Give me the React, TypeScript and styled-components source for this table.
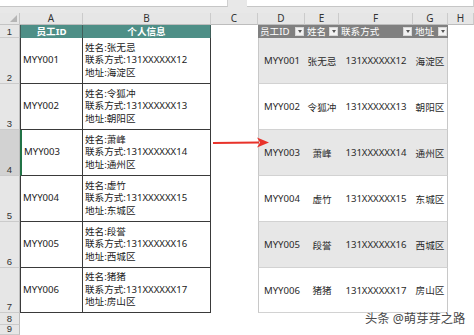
import styled, { createGlobalStyle } from "styled-components"

const GlobalStyle = createGlobalStyle`
    html, body {
        margin: 0;
        padding: 0;
        background: #ffffff;
    }
    body {
        font-family: "Noto Sans", "Noto Sans CJK SC", sans-serif;
        color: #222;
    }
`

const Screen = styled.div`
    position: relative;
    width: 474px;
    height: 335px;
    overflow: hidden;
    background: #e8e8e8;
    display: flex;
    flex-direction: column;
`

const TopStrip = styled.div`
    display: flex;
    gap: 19px;
    height: 7px;
    flex-shrink: 0;
`
const TopBox = styled.div<{ $w?: number }>`
    background: #fff;
    border-bottom: 1px solid #c6c6c6;
    border-right: 1px solid #d0d0d0;
    box-sizing: border-box;
    ${({ $w }) => ($w ? `width: ${$w}px;` : "flex: 1;")}
`

const Sheet = styled.div`
    margin-top: 6px;
    flex: 1;
    display: grid;
    grid-template-columns: 20px 63px 128px 47px 47px 34px 74px 35px 1fr;
    grid-template-rows: 12px 13px 46px 46px 46px 46px 46px 45px 12px 10px;
    background: #fff;
    font-size: 9.6px;
`

const Corner = styled.div`
    position: relative;
    background: #e6e6e6;
    border-right: 1px solid #c4c4c4;
    border-bottom: 1px solid #c4c4c4;
    box-sizing: border-box;
    &:after {
        content: '';
        position: absolute;
        right: 2px;
        bottom: 2px;
        border-left: 7px solid transparent;
        border-bottom: 7px solid #b5b5b5;
    }
`

const ColHead = styled.div`
    background: #e6e6e6;
    border-right: 1px solid #cbcbcb;
    border-bottom: 1px solid #bdbdbd;
    box-sizing: border-box;
    display: flex;
    align-items: flex-end;
    justify-content: center;
    font-size: 10px;
    line-height: 11px;
    color: #333;
`

const RowHead = styled.div<{ $active?: boolean }>`
    background: ${({ $active }) => ($active ? "#d2d2d2" : "#e6e6e6")};
    border-right: 1px solid #bdbdbd;
    border-bottom: 1px solid #cbcbcb;
    box-sizing: border-box;
    display: flex;
    align-items: flex-end;
    justify-content: center;
    font-family: "Liberation Sans", Arial, sans-serif;
    font-size: 9.5px;
    line-height: 11px;
    color: #333;
`

const Blank = styled.div``

const SrcHead = styled.div<{ $first?: boolean }>`
    background: #4e8f87;
    color: #fff;
    font-weight: 700;
    display: flex;
    align-items: center;
    justify-content: center;
    border-right: 1px solid #3f5f5a;
    ${({ $first }) => $first && "border-left: 1px solid #3f5f5a;"}
    box-sizing: border-box;
    line-height: 12px;
`

const SrcCell = styled.div<{ $first?: boolean; $active?: boolean }>`
    display: flex;
    flex-direction: column;
    justify-content: center;
    padding: 0 2px;
    border-right: 1px solid #3a3a3a;
    border-bottom: 1px solid #3a3a3a;
    ${({ $first, $active }) =>
        $first && `border-left: ${$active ? "2px solid #217346" : "1px solid #3a3a3a"};`}
    box-sizing: border-box;
    line-height: 12.6px;
    white-space: nowrap;
`

const TblHead = styled.div`
    background: #808080;
    color: #fff;
    display: flex;
    align-items: center;
    justify-content: space-between;
    padding: 0 1px 0 2px;
    box-sizing: border-box;
    white-space: nowrap;
    line-height: 12px;
`

const FilterBtn = styled.span`
    width: 9px;
    height: 9px;
    flex-shrink: 0;
    background: #f2f2f2;
    border: 1px solid #d8d8d8;
    box-sizing: border-box;
    display: flex;
    align-items: center;
    justify-content: center;
    &:after {
        content: '';
        border-left: 2.5px solid transparent;
        border-right: 2.5px solid transparent;
        border-top: 3px solid #555;
    }
`

const TblCell = styled.div<{ $shade?: boolean; $first?: boolean; $last?: boolean }>`
    background: ${({ $shade }) => ($shade ? "#e7e7e7" : "#ffffff")};
    display: flex;
    align-items: center;
    justify-content: center;
    border-bottom: 1px solid #d2d2d2;
    ${({ $first }) => $first && "border-left: 1px solid #c8c8c8;"}
    ${({ $last }) => $last && "border-right: 1px solid #c8c8c8;"}
    box-sizing: border-box;
    white-space: nowrap;
    color: #2a2a2a;
`

const Arrow = styled.svg`
    position: absolute;
    left: 211px;
    top: 136px;
`

const Watermark = styled.div`
    position: absolute;
    left: 365px;
    top: 310px;
    font-size: 12.3px;
    line-height: 18px;
    color: #4a4a4a;
    text-shadow: 0 0 2px #fff, 0 0 2px #fff;
    white-space: nowrap;
`

interface Person {
    id: string
    name: string
    phone: string
    addr: string
}

const people: Person[] = [
    { id: "MYY001", name: "张无忌", phone: "131XXXXXX12", addr: "海淀区" },
    { id: "MYY002", name: "令狐冲", phone: "131XXXXXX13", addr: "朝阳区" },
    { id: "MYY003", name: "萧峰", phone: "131XXXXXX14", addr: "通州区" },
    { id: "MYY004", name: "虚竹", phone: "131XXXXXX15", addr: "东城区" },
    { id: "MYY005", name: "段誉", phone: "131XXXXXX16", addr: "西城区" },
    { id: "MYY006", name: "猪猪", phone: "131XXXXXX17", addr: "房山区" },
]

const columns = ["A", "B", "C", "D", "E", "F", "G", "H"]
const tableHeads = ["员工ID", "姓名", "联系方式", "地址"]

export default function App() {
    return (
        <>
            <GlobalStyle />
            <Screen>
                <TopStrip>
                    <TopBox $w={228} />
                    <TopBox />
                </TopStrip>
                <Sheet>
                    <Corner />
                    {columns.map((c) => (
                        <ColHead key={c}>{c}</ColHead>
                    ))}

                    <RowHead>1</RowHead>
                    <SrcHead $first>员工ID</SrcHead>
                    <SrcHead>个人信息</SrcHead>
                    <Blank />
                    {tableHeads.map((h) => (
                        <TblHead key={h}>
                            {h}
                            <FilterBtn />
                        </TblHead>
                    ))}
                    <Blank />

                    {people.map((p, i) => {
                        const shade = i % 2 === 0
                        return [
                            <RowHead key={`r${i}`} $active={i === 2}>{i + 2}</RowHead>,
                            <SrcCell key={`a${i}`} $first $active={i === 2}>{p.id}</SrcCell>,
                            <SrcCell key={`b${i}`}>
                                <span>姓名:{p.name}</span>
                                <span>联系方式:{p.phone}</span>
                                <span>地址:{p.addr}</span>
                            </SrcCell>,
                            <Blank key={`c${i}`} />,
                            <TblCell key={`d${i}`} $shade={shade} $first>{p.id}</TblCell>,
                            <TblCell key={`e${i}`} $shade={shade}>{p.name}</TblCell>,
                            <TblCell key={`f${i}`} $shade={shade}>{p.phone}</TblCell>,
                            <TblCell key={`g${i}`} $shade={shade} $last>{p.addr}</TblCell>,
                            <Blank key={`h${i}`} />,
                        ]
                    })}

                    <RowHead>8</RowHead>
                    {columns.map((c) => <Blank key={`8${c}`} />)}
                    <RowHead>9</RowHead>
                    {columns.map((c) => <Blank key={`9${c}`} />)}
                </Sheet>

                <Arrow width="60" height="14" viewBox="0 0 60 14">
                    <line x1="2" y1="7" x2="48" y2="6.5" stroke="#e8322a" strokeWidth="1.8" />
                    <polygon points="46,1.5 58,6.5 46,11.5 49,6.5" fill="#e8322a" />
                </Arrow>
                <Watermark>头条 @萌芽芽之路</Watermark>
            </Screen>
        </>
    )
}
